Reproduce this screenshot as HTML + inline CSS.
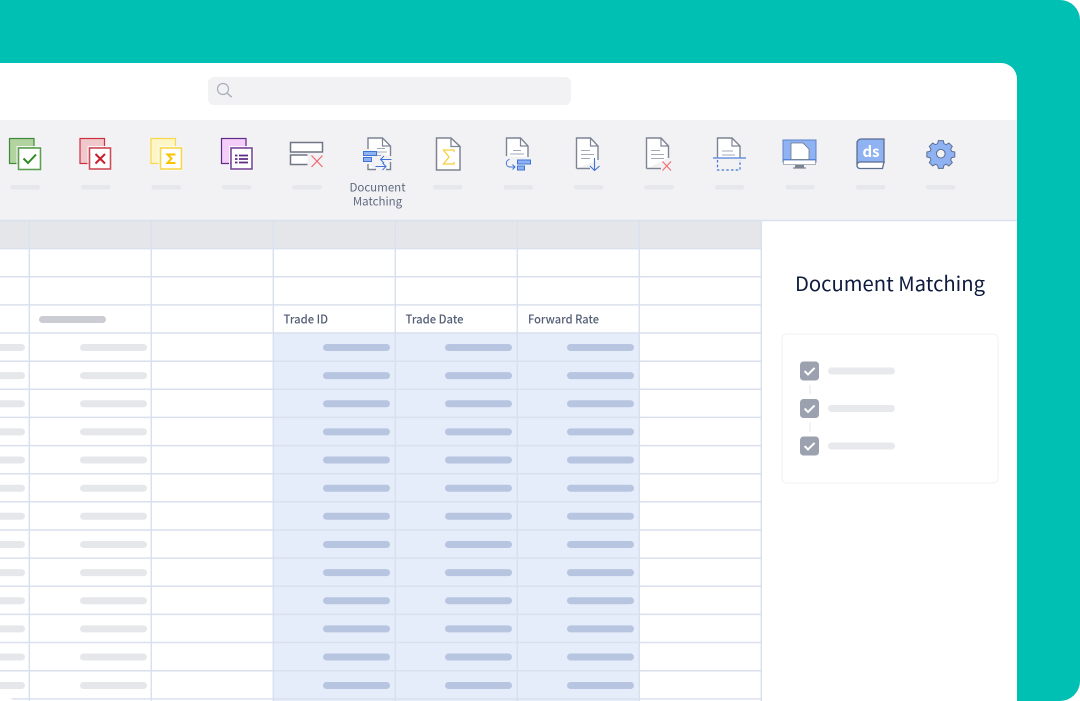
<!DOCTYPE html>
<html lang="en">
<head>
<meta charset="utf-8">
<title>Document Matching</title>
<style>
html,body{margin:0;padding:0;background:#fff;width:1080px;height:701px;overflow:hidden}
svg{display:block}
text{font-family:"Noto Sans CJK SC","Liberation Sans",sans-serif}
</style>
</head>
<body>
<svg width="1080" height="701" viewBox="0 0 1080 701" xmlns="http://www.w3.org/2000/svg">
<defs>
<g id="row">
<rect x="-42" y="-3.5" width="67" height="7" rx="3.5" fill="#E6E7EA"/>
<rect x="80" y="-3.5" width="67" height="7" rx="3.5" fill="#E6E7EA"/>
<rect x="323" y="-3.5" width="67" height="7" rx="3.5" fill="#B8C5E0"/>
<rect x="445" y="-3.5" width="67" height="7" rx="3.5" fill="#B8C5E0"/>
<rect x="567" y="-3.5" width="67" height="7" rx="3.5" fill="#B8C5E0"/>
</g>
<g id="chk">
<rect x="0" y="0" width="19" height="19" rx="3.5" fill="#9CA1B0"/>
<path d="M4.6 9.6l3.4 3.4 6.6-6.6" fill="none" stroke="#fff" stroke-width="2"/>
</g>
</defs>

<!-- teal frame -->
<rect width="1080" height="701" fill="#fff"/>
<path d="M0 0H1060A20 20 0 0 1 1080 20V681A20 20 0 0 1 1060 701H0Z" fill="#00BFB3"/>
<!-- card -->
<path d="M0 63H1001A16 16 0 0 1 1017 79V701H0Z" fill="#fff"/>

<!-- search -->
<rect x="208" y="77" width="363" height="28" rx="6" fill="#F2F2F5"/>
<circle cx="223" cy="89" r="5.500" fill="none" stroke="#A9AEBB" stroke-width="1.200"/>
<path d="M227 93l4.700 4.200" stroke="#A9AEBB" stroke-width="1.400" fill="none"/>

<!-- toolbar -->
<rect x="0" y="120" width="1017" height="100" fill="#F2F2F5"/>
<g fill="#E6E7EA">
<rect x="10.500" y="185" width="29.500" height="4.500" rx="2.250"/>
<rect x="81" y="185" width="29.500" height="4.500" rx="2.250"/>
<rect x="151.500" y="185" width="29.500" height="4.500" rx="2.250"/>
<rect x="222" y="185" width="29.500" height="4.500" rx="2.250"/>
<rect x="292.300" y="185" width="29.500" height="4.500" rx="2.250"/>
<rect x="433" y="185" width="29.500" height="4.500" rx="2.250"/>
<rect x="503.500" y="185" width="29.500" height="4.500" rx="2.250"/>
<rect x="574" y="185" width="29.500" height="4.500" rx="2.250"/>
<rect x="644.300" y="185" width="29.500" height="4.500" rx="2.250"/>
<rect x="714.800" y="185" width="29.500" height="4.500" rx="2.250"/>
<rect x="785.300" y="185" width="29.500" height="4.500" rx="2.250"/>
<rect x="855.800" y="185" width="29.500" height="4.500" rx="2.250"/>
<rect x="926" y="185" width="29.500" height="4.500" rx="2.250"/>
</g>
<text x="377.500" y="191.500" text-anchor="middle" font-size="11.500" fill="#5F6A80">Document</text>
<text x="377.500" y="205.500" text-anchor="middle" font-size="11.500" fill="#5F6A80">Matching</text>

<!-- icon 1 green -->
<rect x="9.500" y="138.500" width="24.500" height="25" fill="#B2D3A0" stroke="#3F8A3A" stroke-width="1.200"/>
<rect x="18.500" y="148" width="22" height="21.500" fill="#fff" stroke="#5E9E50" stroke-width="1.600"/>
<rect x="17" y="146.500" width="25" height="24.500" fill="none" stroke="#F7F8FA" stroke-width="1"/>
<path d="M23.500 158.500l4.500 4.500 8-8.500" fill="none" stroke="#2B8A1F" stroke-width="2"/>

<!-- icon 2 red -->
<rect x="80" y="138.500" width="24.500" height="25" fill="#F0C8CB" stroke="#CC3140" stroke-width="1.200"/>
<rect x="89.500" y="148" width="21" height="21" fill="#fff" stroke="#CE4B58" stroke-width="1.600"/>
<rect x="88" y="146.500" width="24" height="24" fill="none" stroke="#F7F8FA" stroke-width="1"/>
<path d="M95.500 154l9.500 9.500M105 154l-9.500 9.500" stroke="#C81E2E" stroke-width="2" fill="none"/>

<!-- icon 3 yellow -->
<rect x="151" y="138.500" width="24.500" height="25" fill="#FFF6C8" stroke="#F9D74A" stroke-width="1.200"/>
<rect x="160.500" y="148" width="21" height="21" fill="#fff" stroke="#F9D74A" stroke-width="1.600"/>
<rect x="159" y="146.500" width="24" height="24" fill="none" stroke="#F7F8FA" stroke-width="1"/>
<path d="M175.500 154.500h-8l4 4-4 4.500h8" fill="none" stroke="#F8C400" stroke-width="2"/>

<!-- icon 4 purple -->
<rect x="221.500" y="138.500" width="24.500" height="25" fill="#F4CDF9" stroke="#5E2A86" stroke-width="1.200"/>
<rect x="231" y="148" width="21" height="21" fill="#fff" stroke="#7A4A9C" stroke-width="1.600"/>
<rect x="229.500" y="146.500" width="24" height="24" fill="none" stroke="#F7F8FA" stroke-width="1"/>
<path d="M235 155.500h2.500M239 155.500h9M235 159h2.500M239 159h9M235 162.500h2.500M239 162.500h9" stroke="#5E2A86" stroke-width="1.800" fill="none"/>

<!-- icon 5 delete row -->
<rect x="290.500" y="142.500" width="32" height="9.500" fill="#fff" stroke="#6F7685" stroke-width="1.500"/>
<path d="M307.500 155h-17v9.500h17" fill="#fff" stroke="#6F7685" stroke-width="1.500"/>
<path d="M311.500 155.500l11 11.500M322.500 155.500l-11 11.500" stroke="#F2686F" stroke-width="1.200" fill="none"/>

<!-- doc icon 6 document matching -->
<path d="M368 149V138H382.500L390.500 146V156M390.500 162V169.500H386M376 169.500H368V164" fill="#fff" stroke="#7C8494" stroke-width="1.400"/>
<path d="M382.500 138V146H390.500" fill="none" stroke="#7C8494" stroke-width="1.200"/>
<path d="M377 148.500h8M377 152h10M377 155.500h4" stroke="#A3A9B6" stroke-width="1" fill="none"/>
<rect x="363.500" y="151.500" width="13" height="4" fill="#8FB2F2" stroke="#3F74D6" stroke-width="1"/>
<rect x="363.500" y="157.500" width="8" height="4" fill="#8FB2F2" stroke="#3F74D6" stroke-width="1"/>
<path d="M391.500 159.500h-11M384 156l-3.500 3.500 3.500 3.500M375.500 166.500h10.500M382.500 163l3.500 3.500-3.500 3.500" fill="none" stroke="#3F74D6" stroke-width="1"/>

<!-- icon 7 sigma doc -->
<path d="M436.500 138H451L460 146.500V170H436.500Z" fill="#fff" stroke="#7C8494" stroke-width="1.500"/>
<path d="M451 138V146.500H460" fill="none" stroke="#7C8494" stroke-width="1.300"/>
<path d="M454 152v-2h-10.500l5.500 7-5.500 7H454v-2" fill="none" stroke="#F8CF3C" stroke-width="1.300"/>

<!-- icon 8 -->
<path d="M506.500 156V138H520.500L528 146V157" fill="#fff" stroke="#7C8494" stroke-width="1.400"/>
<path d="M520.500 138V146H528" fill="none" stroke="#7C8494" stroke-width="1.200"/>
<path d="M513 150.500h8M510 154h14" stroke="#A3A9B6" stroke-width="1" fill="none"/>
<rect x="517.500" y="160" width="13" height="4" fill="#8FB2F2" stroke="#3F74D6" stroke-width="1"/>
<rect x="517.500" y="166" width="7" height="4" fill="#8FB2F2" stroke="#3F74D6" stroke-width="1"/>
<path d="M509.500 159.500a3.800 3.800 0 0 0 0 7.500h5.500M512.500 164.500l2.500 2.500-2.500 2.500" fill="none" stroke="#3F74D6" stroke-width="1"/>

<!-- icon 9 -->
<path d="M576.500 168.500V138H590.500L598 146V160" fill="#fff" stroke="#7C8494" stroke-width="1.400"/>
<path d="M576.500 168.500H590" stroke="#7C8494" stroke-width="1.400" fill="none"/>
<path d="M590.500 138V146H598" fill="none" stroke="#7C8494" stroke-width="1.200"/>
<path d="M581 150.500h9M581 154.500h13M581 158.500h9" stroke="#A3A9B6" stroke-width="1.100" fill="none"/>
<path d="M594.500 158v12.500M590 166l4.500 4.500 5-4.500" fill="none" stroke="#3F74D6" stroke-width="1.100"/>

<!-- icon 10 -->
<path d="M646.500 168.500V138H661L668.500 146V158" fill="#fff" stroke="#7C8494" stroke-width="1.400"/>
<path d="M646.500 168.500H661" stroke="#7C8494" stroke-width="1.400" fill="none"/>
<path d="M661 138V146H668.500" fill="none" stroke="#7C8494" stroke-width="1.200"/>
<path d="M651 150.500h9M651 154.500h13M651 158.500h13" stroke="#A3A9B6" stroke-width="1.100" fill="none"/>
<path d="M662.500 161.500l8.500 9M671 161.500l-8.500 9" stroke="#F2686F" stroke-width="1.100" fill="none"/>

<!-- icon 11 -->
<path d="M717.500 157.500V138H732L740 146V157.500" fill="#fff" stroke="#7C8494" stroke-width="1.400"/>
<path d="M732 138V146H740" fill="none" stroke="#7C8494" stroke-width="1.200"/>
<path d="M722 151h11M722 155h13" stroke="#A3A9B6" stroke-width="1.100" fill="none"/>
<path d="M713 158h33" stroke="#6B93E0" stroke-width="1.500" fill="none"/>
<path d="M717.500 160v10H740V160" fill="none" stroke="#3F74D6" stroke-width="1.200" stroke-dasharray="2.500 2.200"/>

<!-- icon 12 monitor -->
<rect x="783" y="140" width="33" height="22" fill="#8FB2F2" stroke="#5D82C8" stroke-width="1"/>
<rect x="783.500" y="160" width="32" height="4.500" fill="#fff" stroke="#7C8494" stroke-width="0.600"/>
<path d="M783.500 159.800h32" stroke="#3F74D6" stroke-width="1"/>
<path d="M791 143H803L809 149V159.500H791Z" fill="#fff" stroke="#6A7486" stroke-width="0.800"/>
<path d="M795 165v2.500h9V165" fill="#7C8494"/>
<path d="M793 168h13" stroke="#7C8494" stroke-width="1.200"/>

<!-- icon 13 book -->
<path d="M857 165V143a4 4 0 0 1 4-4H884V162.500H860a3 3 0 0 0-3 2.500Z" fill="#8FB2F2" stroke="#5B6D90" stroke-width="1.300"/>
<path d="M857 165a3 3 0 0 1 3-3H884L882.500 168.500H860a3 3 0 0 1-3-3.500Z" fill="#fff" stroke="#5B6D90" stroke-width="1.300"/>
<text x="871" y="157" text-anchor="middle" font-size="15" font-weight="700" fill="#fff">ds</text>

<!-- icon 14 gear -->
<g transform="translate(940.800,153.700) scale(0.88) translate(-940.500,-154.400)">
<path fill="#8FB2F2" stroke="#5B6D90" stroke-width="1.100" fill-rule="evenodd" d="M937.700 139.500h5.600l.8 3.500 2.600 1.100 3-1.900 3.900 3.900-1.900 3 1.100 2.600 3.600.8v5.600l-3.600.8-1.100 2.600 1.900 3-3.900 3.900-3-1.900-2.600 1.100-.8 3.500h-5.600l-.8-3.500-2.600-1.100-3 1.900-3.900-3.900 1.900-3-1.100-2.600-3.600-.8v-5.600l3.600-.8 1.100-2.600-1.900-3 3.900-3.900 3 1.900 2.600-1.100ZM940.500 149.500a4.900 4.900 0 1 0 0 9.800a4.900 4.900 0 1 0 0-9.800Z"/>
</g>

<!-- grid -->
<rect x="0" y="221" width="761" height="27.500" fill="#E5E6EA"/>
<rect x="273" y="333" width="366" height="368" fill="#E5ECFA"/>
<g stroke="#D9E0EE" stroke-width="1.500" fill="none">
<path d="M0 220.500H1017"/>
<path d="M0 248.600H761M0 276.800H761M0 304.900H761M0 333H761M0 361.200H761M0 389.300H761M0 417.400H761M0 445.600H761M0 473.700H761M0 501.800H761M0 530H761M0 558.100H761M0 586.200H761M0 614.400H761M0 642.500H761M0 670.700H761M0 698.900H761"/>
<path d="M29.300 221V701M151.300 221V701M273.300 221V701M395.300 221V701M517.300 221V701M639.300 221V701M761.300 221V701"/>
</g>
<path d="M0 688Q6 697 16 701H0Z" fill="#fff"/>

<rect x="39" y="316" width="67" height="7" rx="3.500" fill="#CBCDD3"/>
<text x="283.500" y="323.500" font-size="12" font-weight="500" fill="#525C74" textLength="44.500" lengthAdjust="spacingAndGlyphs">Trade ID</text>
<text x="405.500" y="323.500" font-size="12" font-weight="500" fill="#525C74" textLength="58" lengthAdjust="spacingAndGlyphs">Trade Date</text>
<text x="528" y="323.500" font-size="12" font-weight="500" fill="#525C74" textLength="71" lengthAdjust="spacingAndGlyphs">Forward Rate</text>

<use href="#row" transform="translate(0,347.500)"/>
<use href="#row" transform="translate(0,375.600)"/>
<use href="#row" transform="translate(0,403.800)"/>
<use href="#row" transform="translate(0,431.900)"/>
<use href="#row" transform="translate(0,460)"/>
<use href="#row" transform="translate(0,488.200)"/>
<use href="#row" transform="translate(0,516.300)"/>
<use href="#row" transform="translate(0,544.500)"/>
<use href="#row" transform="translate(0,572.600)"/>
<use href="#row" transform="translate(0,600.700)"/>
<use href="#row" transform="translate(0,628.900)"/>
<use href="#row" transform="translate(0,657)"/>
<use href="#row" transform="translate(0,685.500)"/>

<!-- right panel -->
<text x="795" y="291" font-size="20" fill="#0E1B3D" textLength="190" lengthAdjust="spacingAndGlyphs">Document Matching</text>
<rect x="782" y="334" width="216" height="149" rx="5" fill="#fff" stroke="#F3F3F5" stroke-width="1.200"/>
<use href="#chk" x="800" y="361.500"/>
<use href="#chk" x="800" y="399"/>
<use href="#chk" x="800" y="436.500"/>
<path d="M810 385v9M810 422.500v9" stroke="#E8E9ED" stroke-width="1.200"/>
<rect x="828" y="367.500" width="67" height="7" rx="3.500" fill="#E8E9ED"/>
<rect x="828" y="405" width="67" height="7" rx="3.500" fill="#E8E9ED"/>
<rect x="828" y="442.500" width="67" height="7" rx="3.500" fill="#E8E9ED"/>
</svg>
</body>
</html>
